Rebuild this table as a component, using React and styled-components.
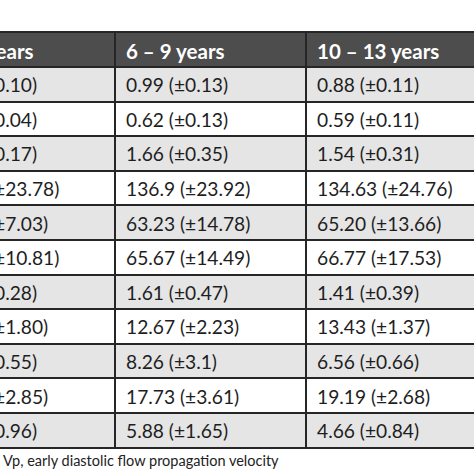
import React from 'react';
import styled, { createGlobalStyle } from 'styled-components';

const GlobalStyle = createGlobalStyle`
  html, body {
    margin: 0;
    padding: 0;
    background: #fff;
    overflow: hidden;
  }
  body {
    width: 474px;
    height: 474px;
    font-family: Lato, "Open Sans", sans-serif;
    color: #1e1e1e;
  }
`;

const headers = ['2 – 5 years', '6 – 9 years', '10 – 13 years'];

const rows = [
  ['1.08 (±0.10)', '0.99 (±0.13)', '0.88 (±0.11)'],
  ['0.68 (±0.04)', '0.62 (±0.13)', '0.59 (±0.11)'],
  ['1.78 (±0.17)', '1.66 (±0.35)', '1.54 (±0.31)'],
  ['130.5 (±23.78)', '136.9 (±23.92)', '134.63 (±24.76)'],
  ['60.14 (±7.03)', '63.23 (±14.78)', '65.20 (±13.66)'],
  ['63.93 (±10.81)', '65.67 (±14.49)', '66.77 (±17.53)'],
  ['1.72 (±0.28)', '1.61 (±0.47)', '1.41 (±0.39)'],
  ['11.54 (±1.80)', '12.67 (±2.23)', '13.43 (±1.37)'],
  ['9.27 (±0.55)', '8.26 (±3.1)', '6.56 (±0.66)'],
  ['16.92 (±2.85)', '17.73 (±3.61)', '19.19 (±2.68)'],
  ['6.12 (±0.96)', '5.88 (±1.65)', '4.66 (±0.84)'],
];

const App = () => (
  <Page>
    <GlobalStyle />
    <Table>
      {headers.map((h) => (
        <HeadCell key={h}>{h}</HeadCell>
      ))}
      {rows.map((row, i) =>
        row.map((value, j) => (
          <Cell key={`${i}-${j}`} $shaded={i % 2 === 0}>
            {value}
          </Cell>
        ))
      )}
    </Table>
    <Footnote>Vp, early diastolic flow propagation velocity</Footnote>
  </Page>
);

const Page = styled.div`
  box-sizing: border-box;
  padding-top: 31px;
  width: 474px;
  height: 474px;
  overflow: hidden;
`;

const Table = styled.div`
  display: grid;
  grid-template-columns: 189px 189px 189px;
  grid-template-rows: 33px repeat(11, 32.6px);
  gap: 2px;
  padding: 2px;
  background: #262626;
  margin-left: -77px;
  width: max-content;
`;

const HeadCell = styled.div`
  display: flex;
  align-items: center;
  padding-left: 10px;
  padding-top: 2px;
  background: #4d4d4d;
  color: #fff;
  font-weight: 700;
  font-size: 20.5px;
  white-space: nowrap;
`;

const Cell = styled.div`
  display: flex;
  align-items: center;
  padding-left: 10px;
  padding-top: 1px;
  background: ${(p) => (p.$shaded ? '#e5e5e5' : '#fff')};
  font-size: 19.2px;
  white-space: nowrap;
`;

const Footnote = styled.div`
  margin-top: 3px;
  padding-left: 3px;
  font-size: 14.5px;
  color: #222;
  white-space: nowrap;
`;

export default App;
